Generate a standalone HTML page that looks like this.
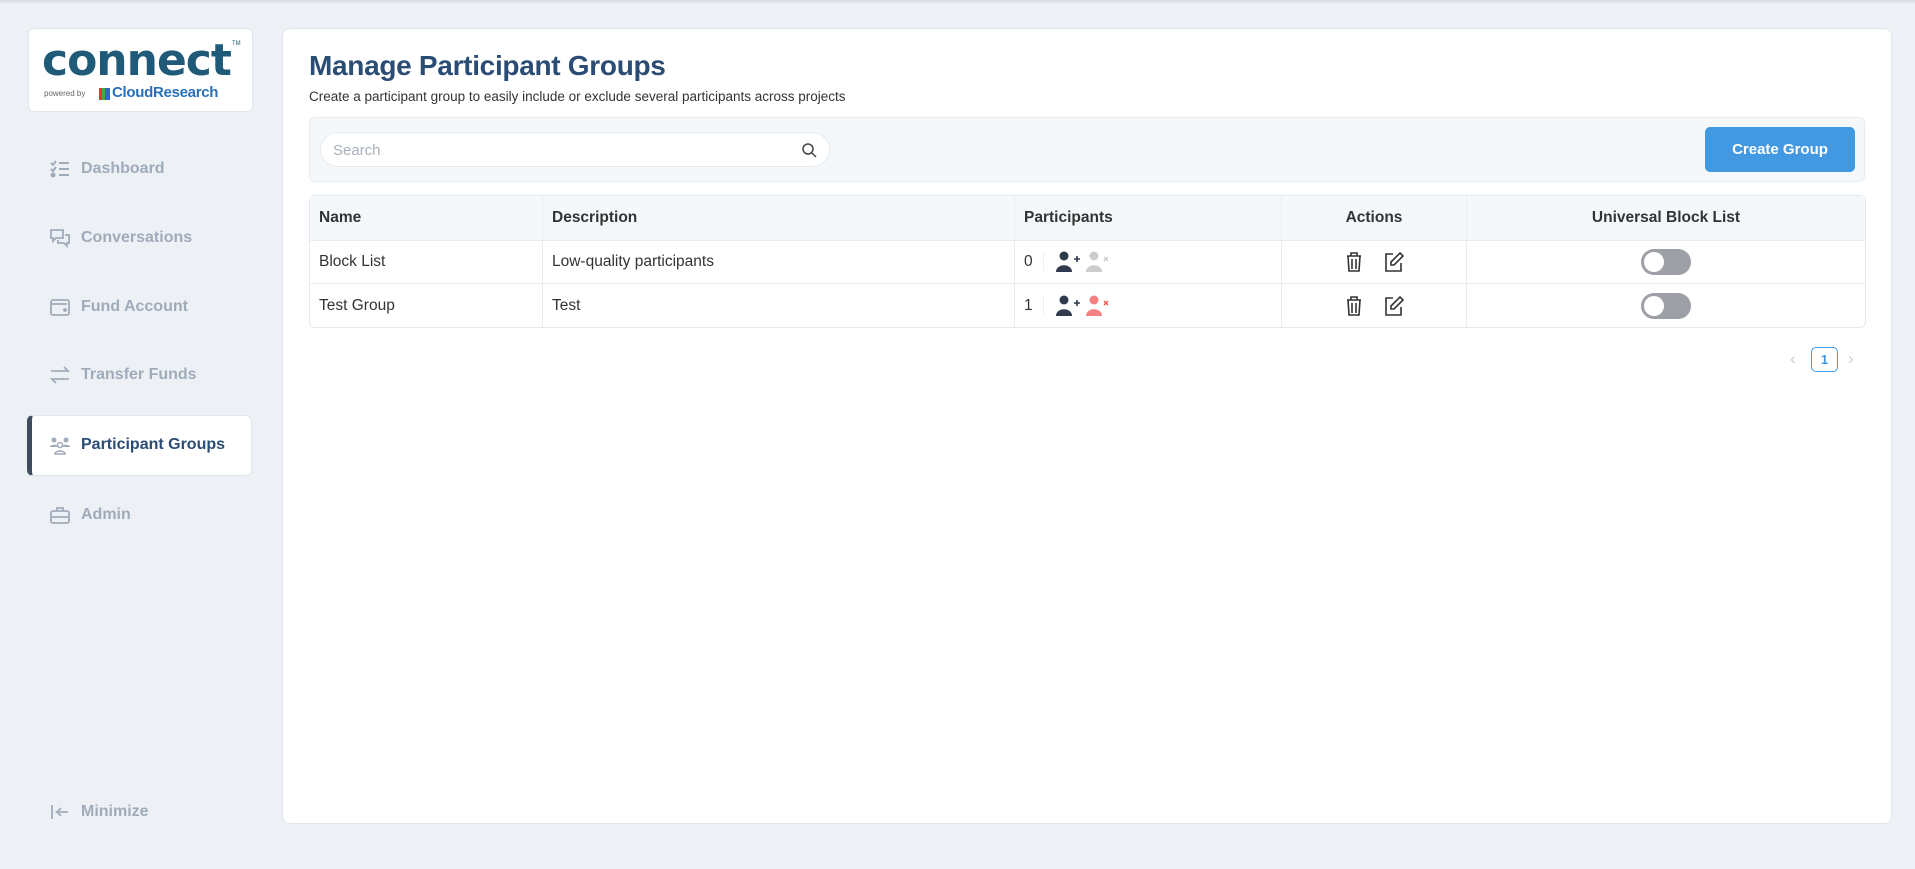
<!DOCTYPE html><html><head><style>
*{box-sizing:border-box;margin:0;padding:0}
body{width:1915px;height:869px;background:#edf1f5;font-family:"Liberation Sans",sans-serif;position:relative;overflow:hidden}
.topsh{position:absolute;left:0;top:0;width:1915px;height:4px;background:linear-gradient(#d5dae0,#edf1f5)}
.logo{position:absolute;left:28px;top:28px;width:225px;height:84px;background:#fff;border:1px solid #e1e6ec;border-radius:6px}
.nav{position:absolute;left:49px;font-weight:bold;font-size:16px;color:#a0abba;display:flex;align-items:center;gap:10px}
.nav svg{width:22px;height:22px}
.active{position:absolute;left:27px;top:415px;width:225px;height:61px;background:#fff;border:1px solid #e1e6ec;border-left:5px solid #3f4b5e;border-radius:6px}
.card{position:absolute;left:282px;top:28px;width:1610px;height:796px;background:#fff;border:1px solid #e1e6ec;border-radius:8px}
h1{position:absolute;left:309px;top:50px;font-size:28px;color:#2b4c74;font-weight:bold;letter-spacing:-0.3px}
.sub{position:absolute;left:309px;top:89px;font-size:13.5px;color:#333}
.tool{position:absolute;left:309px;top:117px;width:1556px;height:65px;background:#f5f8fb;border:1px solid #e7ecf1;border-radius:6px}
.search{position:absolute;left:320px;top:132px;width:510px;height:35px;background:#fff;border:1px solid #e6eaef;border-radius:18px;font-size:15px;color:#a8b0bb;padding:9px 12px}
.btn{position:absolute;left:1705px;top:127px;width:150px;height:45px;background:#4299e1;border-radius:5px;color:#fff;font-weight:bold;font-size:15px;text-align:center;line-height:45px}
table{position:absolute;left:309px;top:195px;width:1557px;border-collapse:separate;border-spacing:0;border:1px solid #e3e8ee;border-radius:6px;font-size:15.5px;color:#333}
td,th{border-right:1px solid #e9edf2;border-bottom:1px solid #e9edf2;padding:0 9px;text-align:left}
th{background:#f5f8fb;height:45px;font-weight:bold}
td{height:43px}
tr td:last-child,tr th:last-child{border-right:none}
tr:last-child td{border-bottom:none}
.c{text-align:center}
.tog{display:inline-block;width:50px;height:26px;background:#9ca0a6;border-radius:13px;position:relative;vertical-align:middle}
.tog:after{content:"";position:absolute;left:3px;top:3px;width:20px;height:20px;border-radius:50%;background:#fff}
.pg{position:absolute;left:1811px;top:347px;width:27px;height:25px;border:1px solid #4299e1;border-radius:5px;color:#4299e1;font-size:13px;text-align:center;line-height:23px;font-weight:bold}
</style></head><body>
<div class="topsh"></div>
<div class="logo">
<div style="position:absolute;left:13px;top:6px;font-size:44px;font-weight:bold;color:#1f5a78;letter-spacing:-1px;font-family:'DejaVu Sans',sans-serif">connect</div>
<div style="position:absolute;left:203px;top:12px;font-size:6px;color:#245a7a">TM</div>
<div style="position:absolute;left:15px;top:60px;font-size:8px;color:#666">powered by</div>
<div style="position:absolute;left:70px;top:59px;width:11px;height:12px;background:repeating-linear-gradient(90deg,#e33 0 3px,#4a4 3px 6px,#36c 6px 11px)"></div>
<div style="position:absolute;left:83px;top:55px;font-size:15px;font-weight:bold;color:#2a6fb7;letter-spacing:-0.3px">CloudResearch</div>
</div>
<div class="nav" style="top:158px"><svg viewBox="0 0 22 22" fill="none" stroke="#a0abba" stroke-width="2"><path d="M2 5l2 2 3-4M2 11l2 2 3-4M10 5h10M10 11h10M10 17h10"/><circle cx="4" cy="17" r="1.5" fill="#a0abba"/></svg>Dashboard</div>
<div class="nav" style="top:227px"><svg viewBox="0 0 22 22" fill="none" stroke="#a0abba" stroke-width="1.8"><path d="M2 3h12v8H7l-3 3v-3H2zM16 8h4v8h-2v3l-3-3h-6v-3"/></svg>Conversations</div>
<div class="nav" style="top:296px"><svg viewBox="0 0 22 22" fill="none" stroke="#a0abba" stroke-width="1.8"><rect x="2" y="4" width="18" height="15" rx="2"/><path d="M2 8h16"/><circle cx="16" cy="14" r="1" fill="#a0abba"/></svg>Fund Account</div>
<div class="nav" style="top:364px"><svg viewBox="0 0 22 22" fill="none" stroke="#a0abba" stroke-width="1.8"><path d="M2 7h17l-4-4M20 15H3l4 4"/></svg>Transfer Funds</div>
<div class="active"></div>
<div class="nav" style="top:434px;color:#2b4c74"><svg viewBox="0 0 22 22" fill="#a0abba"><circle cx="5" cy="6" r="2.5"/><circle cx="17" cy="6" r="2.5"/><path d="M1 13c0-3 8-3 8 0zM13 13c0-3 8-3 8 0z"/><circle cx="11" cy="11" r="2.5" fill="none" stroke="#a0abba" stroke-width="1.5"/><path d="M6 20c0-4 10-4 10 0z" fill="none" stroke="#a0abba" stroke-width="1.5"/></svg>Participant Groups</div>
<div class="nav" style="top:504px"><svg viewBox="0 0 22 22" fill="none" stroke="#a0abba" stroke-width="1.8"><rect x="2" y="7" width="18" height="12" rx="2"/><path d="M8 7V4h6v3M2 13h18"/></svg>Admin</div>
<div class="nav" style="top:801px"><svg viewBox="0 0 22 22" fill="none" stroke="#a0abba" stroke-width="1.8"><path d="M3 4v14M19 11H8l4-4M8 11l4 4"/></svg>Minimize</div>
<div class="card"></div>
<h1>Manage Participant Groups</h1>
<div class="sub">Create a participant group to easily include or exclude several participants across projects</div>
<div class="tool"></div>
<div class="search">Search<svg style="position:absolute;right:12px;top:9px" width="16" height="16" viewBox="0 0 16 16" fill="none" stroke="#444" stroke-width="1.5"><circle cx="7" cy="7" r="5"/><path d="M11 11l4 4"/></svg></div>
<div class="btn">Create Group</div>
<table>
<tr><th style="width:233px">Name</th><th style="width:472px">Description</th><th style="width:267px">Participants</th><th class="c" style="width:185px">Actions</th><th class="c">Universal Block List</th></tr>
<tr><td>Block List</td><td>Low-quality participants</td><td>0 <span style="border-left:1px dotted #ddd;margin-left:6px;padding-left:12px"><svg width="26" height="22" viewBox="0 0 26 22" style="vertical-align:middle"><circle cx="8" cy="5" r="4.5" fill="#2f3a4d"/><path d="M0 21c0-9 16-9 16 0z" fill="#2f3a4d"/><path d="M18 8h6M21 5v6" stroke="#2f3a4d" stroke-width="1.6"/></svg> <svg width="26" height="22" viewBox="0 0 26 22" style="vertical-align:middle"><circle cx="8" cy="5" r="4.5" fill="#ccc"/><path d="M0 21c0-9 16-9 16 0z" fill="#ccc"/><path d="M18 6l4 4M22 6l-4 4" stroke="#ccc" stroke-width="1.4"/></svg></span></td>
<td class="c"><svg width="22" height="22" viewBox="0 0 22 22" fill="none" stroke="#333" stroke-width="1.6" style="vertical-align:middle"><path d="M4 5h14M8 5V2h6v3M5 5l1 15h10l1-15M9 8v10M13 8v10"/></svg>&nbsp;&nbsp;&nbsp;&nbsp;<svg width="22" height="22" viewBox="0 0 22 22" fill="none" stroke="#333" stroke-width="1.6" style="vertical-align:middle"><path d="M10 3H3v17h15v-8M17 2l3 3-9 9H8v-3z"/></svg></td><td class="c"><span class="tog"></span></td></tr>
<tr><td>Test Group</td><td>Test</td><td>1 <span style="border-left:1px dotted #ddd;margin-left:6px;padding-left:12px"><svg width="26" height="22" viewBox="0 0 26 22" style="vertical-align:middle"><circle cx="8" cy="5" r="4.5" fill="#2f3a4d"/><path d="M0 21c0-9 16-9 16 0z" fill="#2f3a4d"/><path d="M18 8h6M21 5v6" stroke="#2f3a4d" stroke-width="1.6"/></svg> <svg width="26" height="22" viewBox="0 0 26 22" style="vertical-align:middle"><circle cx="8" cy="5" r="4.5" fill="#f48080"/><path d="M0 21c0-9 16-9 16 0z" fill="#f48080"/><path d="M18 6l4 4M22 6l-4 4" stroke="#f05050" stroke-width="1.4"/></svg></span></td>
<td class="c"><svg width="22" height="22" viewBox="0 0 22 22" fill="none" stroke="#333" stroke-width="1.6" style="vertical-align:middle"><path d="M4 5h14M8 5V2h6v3M5 5l1 15h10l1-15M9 8v10M13 8v10"/></svg>&nbsp;&nbsp;&nbsp;&nbsp;<svg width="22" height="22" viewBox="0 0 22 22" fill="none" stroke="#333" stroke-width="1.6" style="vertical-align:middle"><path d="M10 3H3v17h15v-8M17 2l3 3-9 9H8v-3z"/></svg></td><td class="c"><span class="tog"></span></td></tr>
</table>
<div style="position:absolute;left:1790px;top:349px;color:#ccc;font-size:17px">‹</div>
<div class="pg">1</div>
<div style="position:absolute;left:1848px;top:349px;color:#ccc;font-size:17px">›</div>
</body></html>
